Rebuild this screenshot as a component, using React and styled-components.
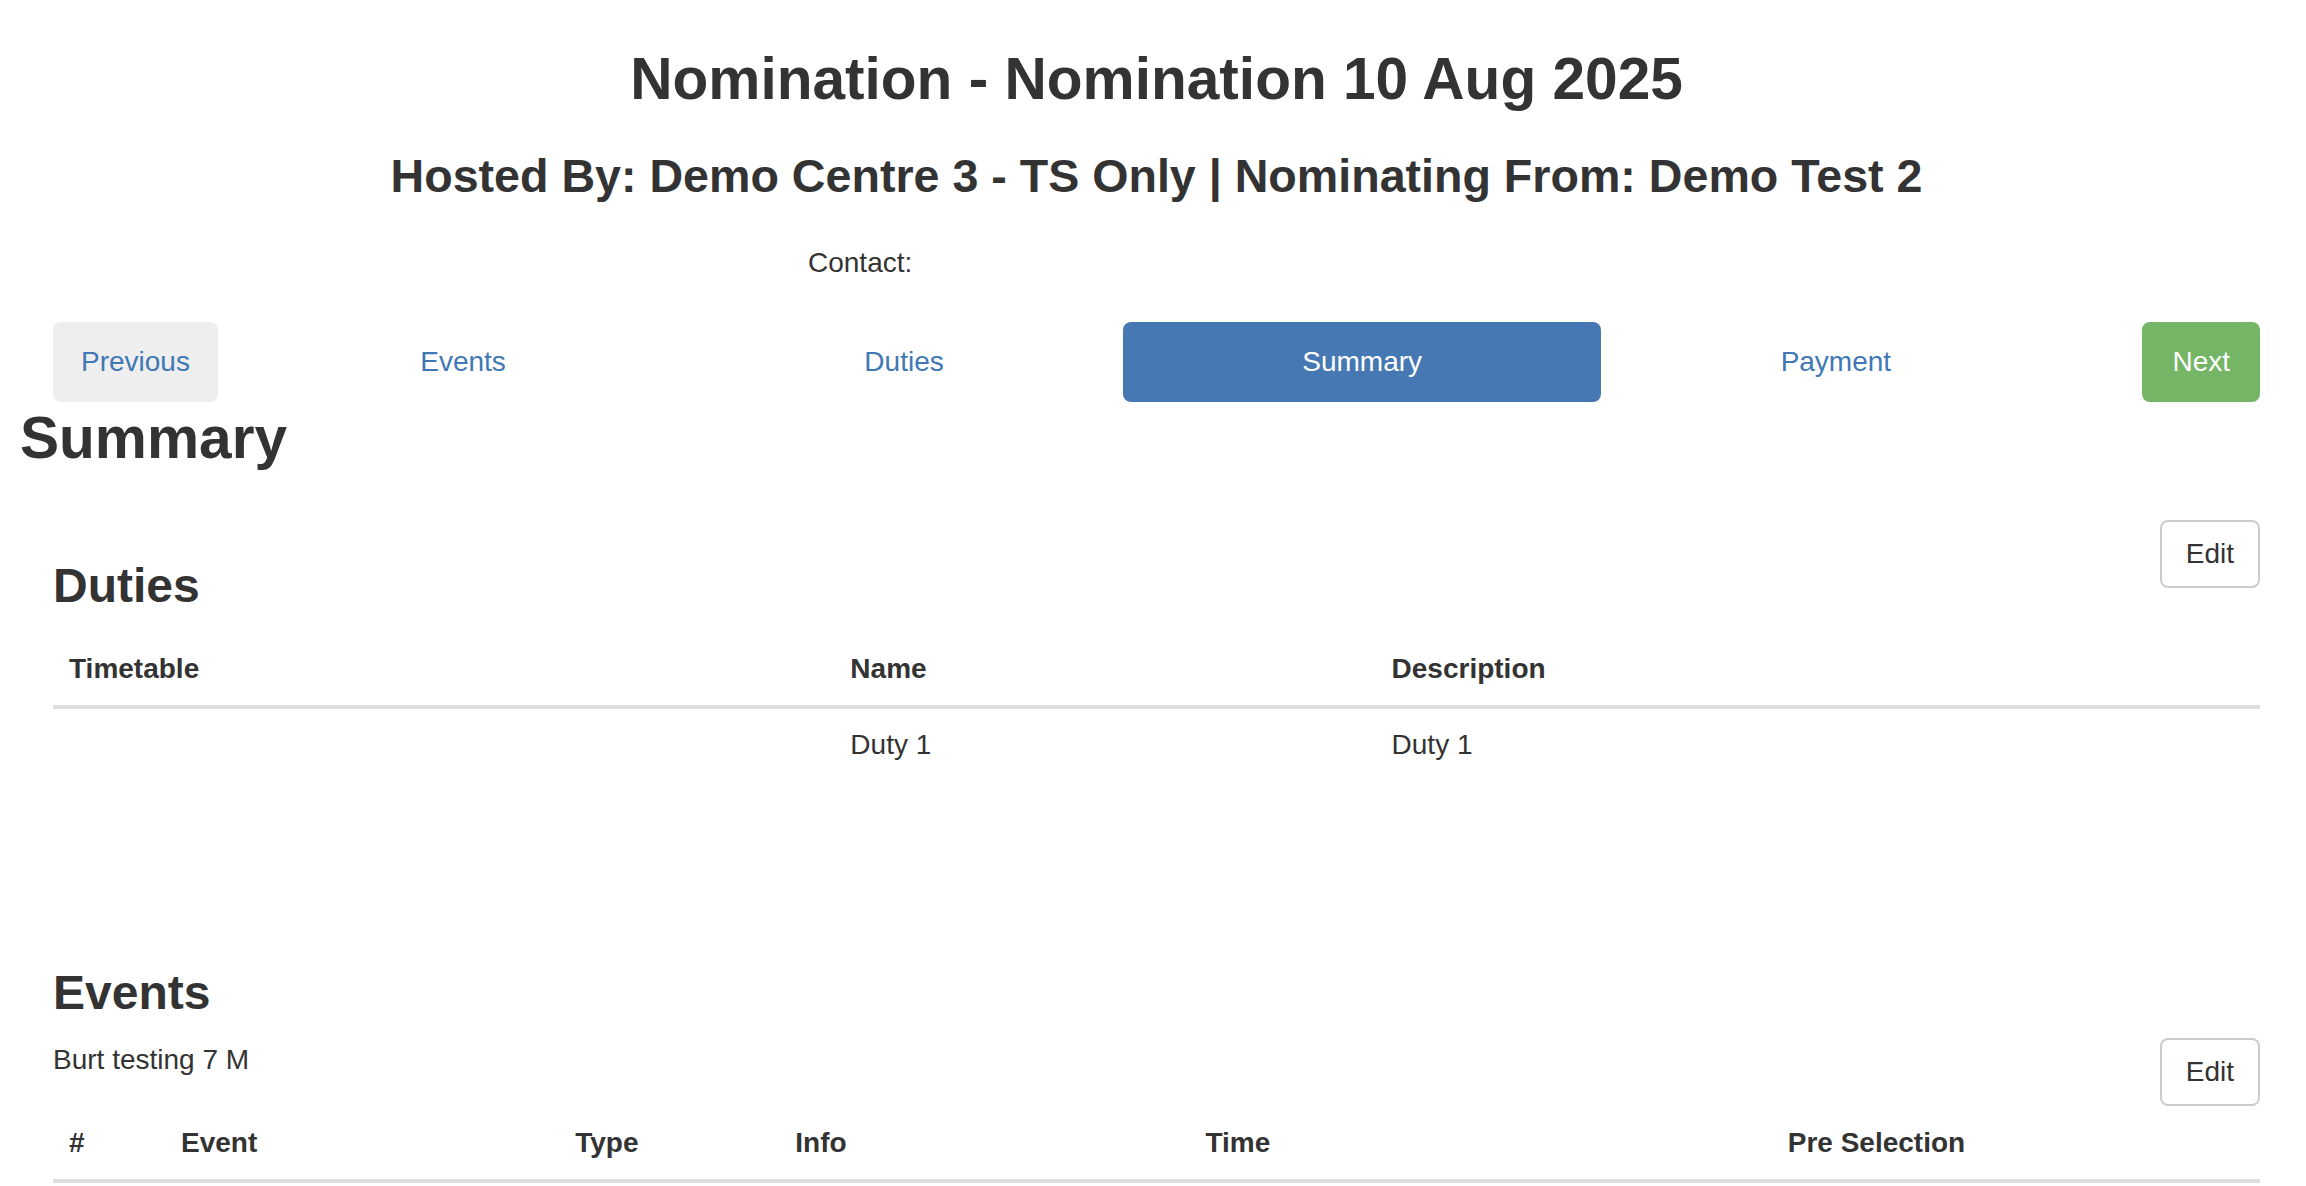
import React from 'react'
import styled, { createGlobalStyle, css } from 'styled-components'

const GlobalStyle = createGlobalStyle`
  body {
    margin: 0;
    background: #fff;
    color: #333;
    font-family: "Liberation Sans", Arial, Helvetica, sans-serif;
    font-size: 28px;
    line-height: 40px;
  }
  * { box-sizing: border-box; }
`

const Page = styled.div`
  padding: 0 46px 0 20px;
`

const Inner = styled.div`
  padding-left: 33px;
`

const Title = styled.h2`
  margin: 47px 0 0;
  font-size: 58.6px;
  font-weight: 700;
  line-height: 1.1;
  text-align: center;
`

const Subtitle = styled.h3`
  margin: 40px 0 0;
  font-size: 46.6px;
  font-weight: 700;
  line-height: 1.1;
  text-align: center;
`

const ContactLine = styled.div`
  margin-top: 40px;
  padding-left: 755px;
`

const Wizard = styled.div`
  display: flex;
  align-items: center;
  margin-top: 39px;
`

const pill = css`
  display: block;
  padding: 20px 30px;
  border-radius: 8px;
  font-size: 28px;
  line-height: 40px;
  text-align: center;
  white-space: nowrap;
  text-decoration: none;
  cursor: pointer;
`

const StepButton = styled.a`
  ${pill};
  flex: none;
  padding: ${p => (p.$variant === 'next' ? '20px 30px' : '20px 28px')};
  background: ${p => (p.$variant === 'next' ? '#74b566' : '#eeeeee')};
  color: ${p => (p.$variant === 'next' ? '#fff' : '#3f78b5')};
`

const Steps = styled.div`
  flex: 1;
  display: flex;
  margin: 0 72px 0 23px;
`

const Step = styled.a`
  ${pill};
  flex: 1 1 auto;
  background: ${p => (p.$active ? '#4679b3' : 'transparent')};
  color: ${p => (p.$active ? '#fff' : '#3f78b5')};
`

const PageHeading = styled.h2`
  margin: 4px 0 0;
  font-size: 58.6px;
  font-weight: 700;
  line-height: 1.1;
`

const Section = styled.section`
  display: flex;
  flex-direction: column;
  margin-top: ${p => p.$gap}px;
`

const SectionHead = styled.div`
  display: flex;
  justify-content: space-between;
  align-items: flex-start;
`

const SectionTitle = styled.h3`
  margin: 40px 0 20px;
  font-size: 48px;
  font-weight: 700;
  line-height: 1.1;
`

const MetaRow = styled.div`
  display: flex;
  justify-content: space-between;
  align-items: flex-start;
`

const EditButton = styled.button`
  margin-top: ${p => p.$offset || 0}px;
  margin-bottom: ${p => (p.$offset ? 1 : 0)}px;
  padding: 12px 24px;
  border: 2px solid #ccc;
  border-radius: 8px;
  background: #fff;
  color: #333;
  font-family: inherit;
  font-size: 28px;
  line-height: 40px;
  cursor: pointer;
`

const Table = styled.table`
  width: 100%;
  border-collapse: collapse;
  table-layout: fixed;
  margin-bottom: 40px;
`

const Th = styled.th`
  padding: 16px;
  font-weight: 700;
  text-align: left;
  vertical-align: bottom;
  border-bottom: 4px solid #ddd;
`

const Td = styled.td`
  padding: 16px;
  vertical-align: top;
`

const steps = ['Events', 'Duties', 'Summary', 'Payment']

const dutyCols = [
  { label: 'Timetable', width: 781 },
  { label: 'Name', width: 541 },
  { label: 'Description', width: 884 },
]

const duties = [{ timetable: '', name: 'Duty 1', description: 'Duty 1' }]

const eventCols = [
  { label: '#', width: 112 },
  { label: 'Event', width: 394 },
  { label: 'Type', width: 220 },
  { label: 'Info', width: 410 },
  { label: 'Time', width: 582 },
  { label: 'Pre Selection', width: 488 },
]

const Head = ({ cols }) => (
  <>
    <colgroup>
      {cols.map(c => (
        <col key={c.label} style={{ width: c.width }} />
      ))}
    </colgroup>
    <thead>
      <tr>
        {cols.map(c => (
          <Th key={c.label}>{c.label}</Th>
        ))}
      </tr>
    </thead>
  </>
)

const App = () => {
  return (
    <Page>
      <GlobalStyle />
      <Inner>
        <Title>Nomination - Nomination 10 Aug 2025</Title>
        <Subtitle>Hosted By: Demo Centre 3 - TS Only | Nominating From: Demo Test 2</Subtitle>
        <ContactLine>Contact: </ContactLine>

        <Wizard>
          <StepButton>Previous</StepButton>
          <Steps>
            {steps.map(s => (
              <Step key={s} $active={s === 'Summary'}>{s}</Step>
            ))}
          </Steps>
          <StepButton $variant="next">Next</StepButton>
        </Wizard>
      </Inner>

      <PageHeading>Summary</PageHeading>

      <Inner>
        {/* Duties */}
        <Section $gap={50}>
          <SectionHead>
            <SectionTitle>Duties</SectionTitle>
            <EditButton>Edit</EditButton>
          </SectionHead>
          <Table>
            <Head cols={dutyCols} />
            <tbody>
              {duties.map((d, i) => (
                <tr key={'d' + i}>
                  <Td>{d.timetable}</Td>
                  <Td>{d.name}</Td>
                  <Td>{d.description}</Td>
                </tr>
              ))}
            </tbody>
          </Table>
        </Section>

        {/* Events */}
        <Section $gap={106}>
          <SectionTitle>Events</SectionTitle>
          <MetaRow>
            <span>Burt testing 7 M</span>
            <EditButton $offset={-2}>Edit</EditButton>
          </MetaRow>
          <Table>
            <Head cols={eventCols} />
            <tbody />
          </Table>
        </Section>
      </Inner>
    </Page>
  )
}

export default App
